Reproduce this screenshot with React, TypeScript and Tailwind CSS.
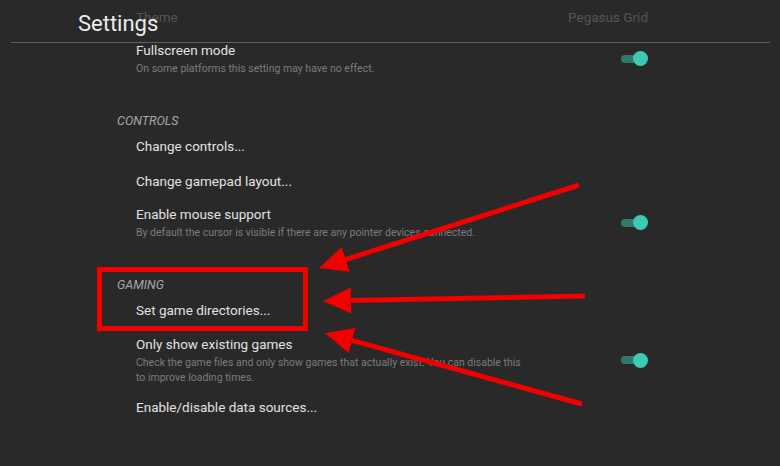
import React from 'react';

const Toggle = () => (
  <div className="flex items-center">
    <div className="w-[20px] h-[8px] rounded-full bg-[#2f7a6b]" />
    <div className="w-[15px] h-[15px] rounded-full bg-[#3dc9b4] -ml-[8px]" />
  </div>
);

interface RowProps {
  title: string;
  desc?: string;
  toggle?: boolean;
  className?: string;
}

const Row: React.FC<RowProps> = ({ title, desc, toggle, className }) => (
  <div className={`flex items-center justify-between w-[512px] ml-[136px] ${className ?? ''}`}>
    <div>
      <div className="text-[13.5px] leading-[18px] text-[#e2e2e2]">{title}</div>
      {desc && (
        <div className="mt-[2px] max-w-[392px] text-[10.5px] leading-[15px] text-[#7c7c7c]">{desc}</div>
      )}
    </div>
    {toggle && <Toggle />}
  </div>
);

const Section = ({ label, className }: { label: string; className?: string }) => (
  <div className={`ml-[117px] text-[12.5px] leading-[16px] italic text-[#a8a8a8] ${className ?? ''}`}>{label}</div>
);

function arrow(sx: number, sy: number, tx: number, ty: number) {
  const dx = tx - sx;
  const dy = ty - sy;
  const len = Math.hypot(dx, dy);
  const ux = dx / len;
  const uy = dy / len;
  const hl = 28;
  const hw = 13;
  const bx = tx - ux * hl;
  const by = ty - uy * hl;
  const px = -uy;
  const py = ux;
  return {
    line: { x1: sx, y1: sy, x2: bx + ux * 2, y2: by + uy * 2 },
    head: `${tx},${ty} ${bx + px * hw},${by + py * hw} ${bx - px * hw},${by - py * hw}`,
  };
}

const arrows = [
  arrow(579, 185, 319, 268),
  arrow(585, 296, 323, 301),
  arrow(582, 404, 325, 333),
];

export default function App() {
  return (
    <div
      className="relative w-[780px] h-[466px] overflow-hidden bg-[#292929]"
      style={{ fontFamily: 'Roboto, "Noto Sans", sans-serif' }}
    >
      <div className="pt-[8px]">
        <div className="flex justify-between w-[512px] ml-[136px] text-[13.5px] leading-[18px] text-[#555555]">
          <span>Theme</span>
          <span>Pegasus Grid</span>
        </div>
        <Row
          className="mt-[15px]"
          title="Fullscreen mode"
          desc="On some platforms this setting may have no effect."
          toggle
        />
        <Section className="mt-[37px]" label="CONTROLS" />
        <Row className="mt-[8px]" title="Change controls..." />
        <Row className="mt-[17px]" title="Change gamepad layout..." />
        <Row
          className="mt-[15px]"
          title="Enable mouse support"
          desc="By default the cursor is visible if there are any pointer devices connected."
          toggle
        />
        <Section className="mt-[37px]" label="GAMING" />
        <Row className="mt-[8px]" title="Set game directories..." />
        <Row
          className="mt-[16px] -mb-[2px]"
          title="Only show existing games"
          desc="Check the game files and only show games that actually exist. You can disable this to improve loading times."
          toggle
        />
        <Row className="mt-[15px]" title="Enable/disable data sources..." />
      </div>

      {/* header sits over the scrolled list */}
      <div className="absolute left-[11px] right-[10px] top-0 h-[43px] border-b border-[#5e5e5e]">
        <div className="ml-[67px] pt-[10px] text-[22px] leading-[28px] text-[#ececec]">Settings</div>
      </div>

      {/* annotation */}
      <div className="absolute left-[97px] top-[267px] w-[211px] h-[64px] border-[5px] border-[#f20000]" />
      <svg className="absolute inset-0" width="780" height="466" viewBox="0 0 780 466">
        {arrows.map((a, i) => (
          <g key={i} fill="#f20000" stroke="#f20000">
            <line {...a.line} strokeWidth={5} />
            <polygon points={a.head} stroke="none" />
          </g>
        ))}
      </svg>
    </div>
  );
}
